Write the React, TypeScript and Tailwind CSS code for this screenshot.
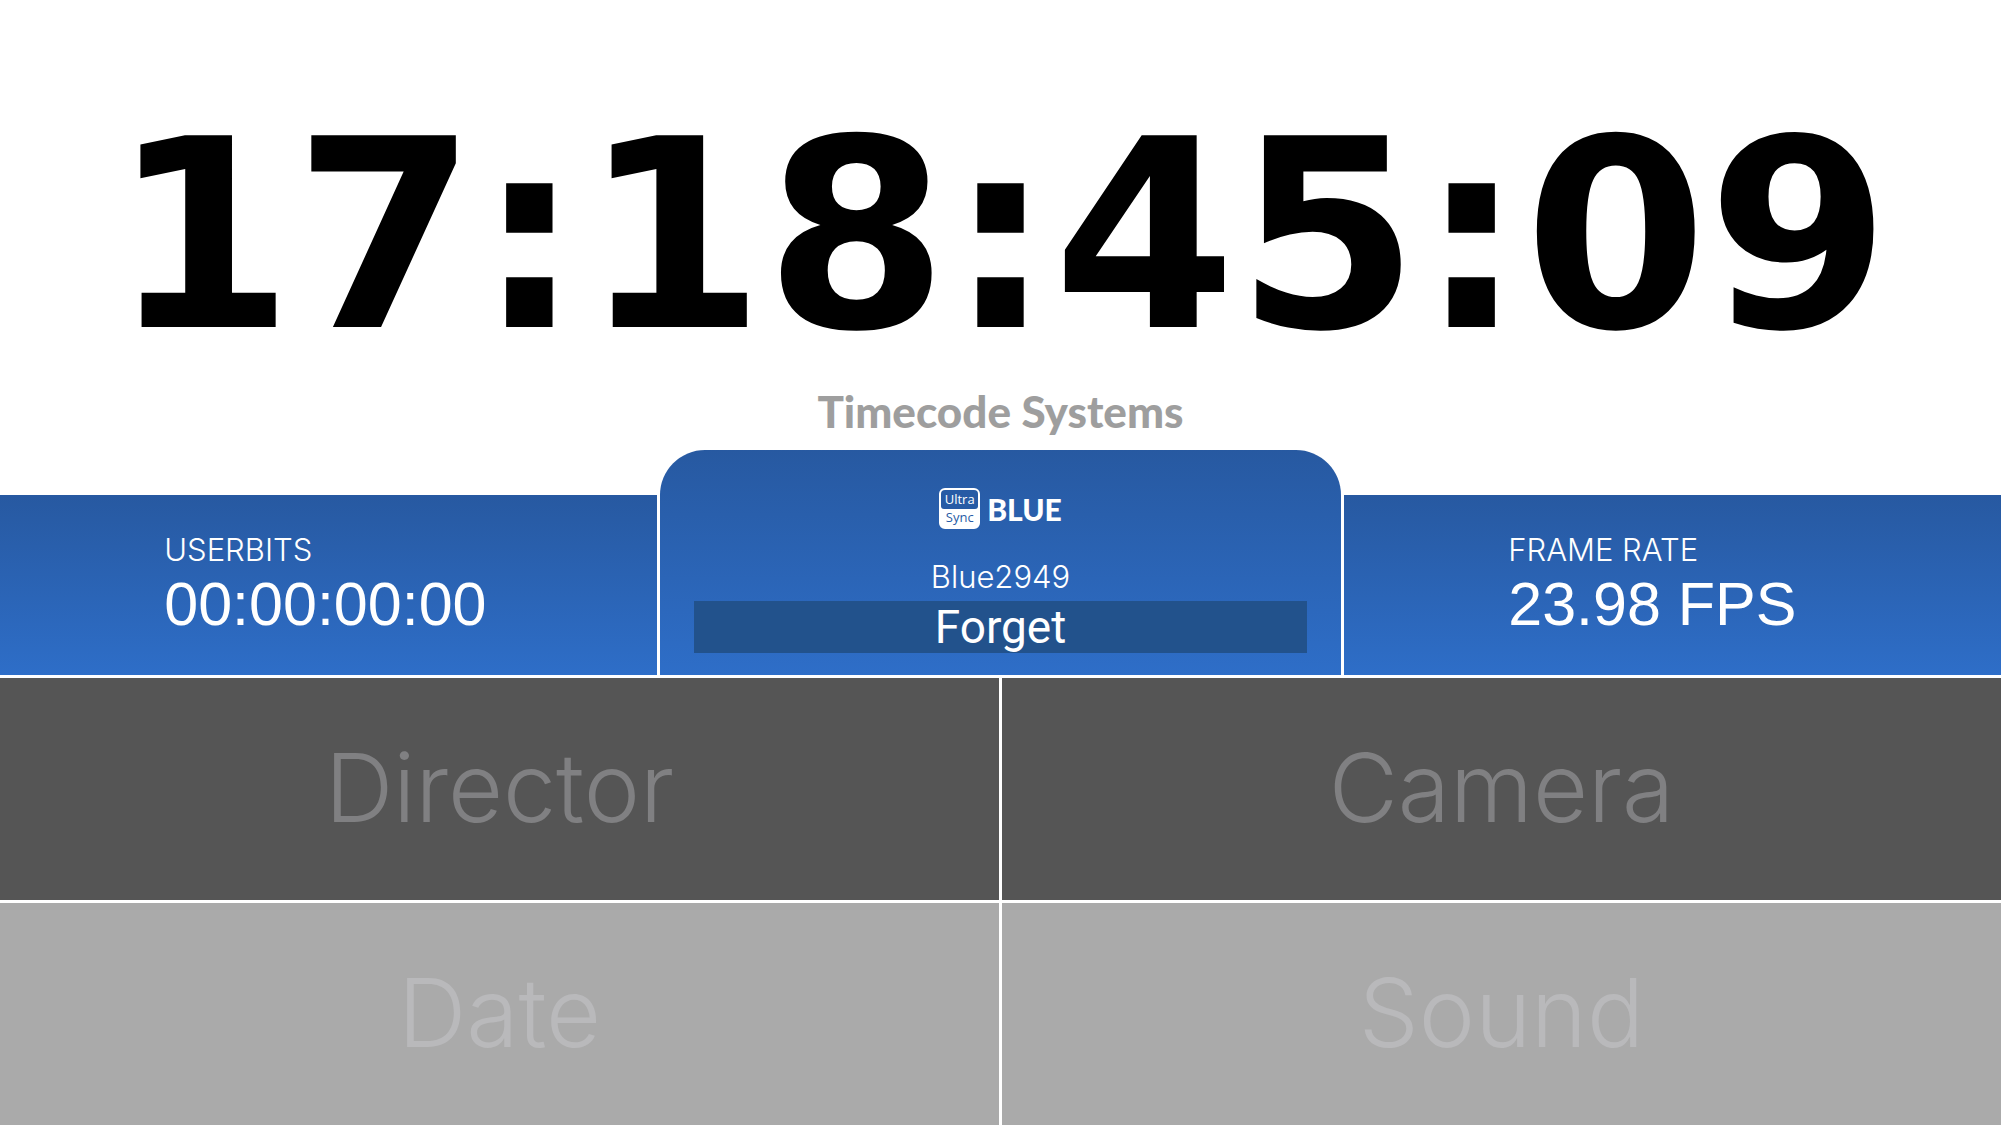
const TIMECODE = '17:18:45:09';

function DeviceLogo() {
  return (
    <div className="flex items-center gap-[7px] text-white">
      <div className="flex size-[41px] flex-col overflow-hidden rounded-md border-2 border-white bg-white font-['Open_Sans','Noto_Sans',sans-serif] text-[13px]">
        <span className="h-[19px] rounded-b-[3px] bg-[#275ba5] text-center leading-[19px]">Ultra</span>
        <span className="h-[18px] text-center leading-4 text-[#275ba5]">Sync</span>
      </div>
      <span className="font-[Lato,sans-serif] text-[30px] leading-8 font-black">BLUE</span>
    </div>
  );
}

function Reading({ label, value }: { label: string; value: string }) {
  return (
    <section className="flex min-h-[180px] flex-col justify-center bg-linear-to-b from-[#2759a1] to-[#2e6ec8] pt-0.5 pl-[25%] text-white">
      <h2 className="font-[Inter,sans-serif] text-[31px] leading-9 font-light">{label}</h2>
      <p className="font-['Liberation_Sans',Arial,sans-serif] text-[61px] leading-[72px] whitespace-nowrap">{value}</p>
    </section>
  );
}

function SlateField({ name, dark = false }: { name: string; dark?: boolean }) {
  const tone = dark
    ? 'bg-[#555555] text-white placeholder:text-[#808082]'
    : 'bg-[#aaaaaa] text-black placeholder:text-[#b9b9bb]';
  return (
    <input
      type="text"
      aria-label={name}
      placeholder={name}
      className={`h-full min-h-40 w-full min-w-0 pb-1 text-center font-[Inter,sans-serif] text-[95px] leading-none font-light outline-none placeholder:opacity-100 ${tone}`}
    />
  );
}

export default function App() {
  return (
    <main className="flex min-h-screen flex-col bg-white">
      <header className="flex min-h-[44vh] flex-col items-center pt-[82px]">
        <h1 className="font-['DejaVu_Sans',Verdana,sans-serif] text-[263px] leading-[308px] font-bold whitespace-nowrap text-black">
          {TIMECODE}
        </h1>
        <p className="font-[Lato,sans-serif] text-[44px] leading-[42px] font-black text-[#9e9e9e]">
          Timecode Systems
        </p>
      </header>

      <div className="-mt-[45px] grid grid-cols-[657fr_681fr_657fr] items-end gap-[3px]">
        <Reading label="USERBITS" value="00:00:00:00" />
        <section className="flex min-h-[225px] flex-col items-center rounded-t-[45px] bg-linear-to-b from-[#2759a1] to-[#2e6ec8] px-[5%] pt-[38px] pb-[22px] text-white">
          <DeviceLogo />
          <p className="mt-[30px] font-[Inter,sans-serif] text-[31px] leading-9 font-light">Blue2949</p>
          <button
            type="button"
            className="mt-[6px] h-[52px] w-full bg-[#22528c] font-[Roboto,sans-serif] text-[46px] leading-[52px]"
          >
            Forget
          </button>
        </section>
        <Reading label="FRAME RATE" value="23.98 FPS" />
      </div>

      <form className="mt-[3px] grid flex-1 grid-cols-2 grid-rows-2 gap-[3px]">
        <SlateField name="Director" dark />
        <SlateField name="Camera" dark />
        <SlateField name="Date" />
        <SlateField name="Sound" />
      </form>
    </main>
  );
}
